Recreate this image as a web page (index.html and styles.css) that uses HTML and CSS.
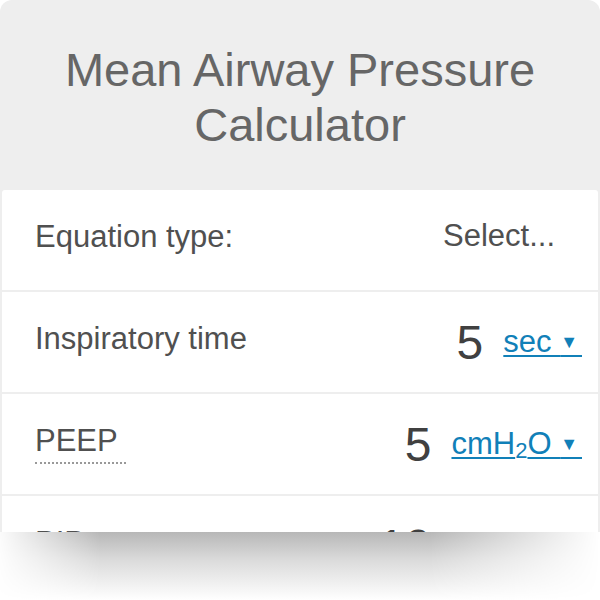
FILE: index.html
```html
<!DOCTYPE html>
<html>
<head>
<meta charset="utf-8">
<link rel="stylesheet" href="styles.css">
</head>
<body>
<div class="frame">
  <div class="card">
    <div class="header">
      <h1 class="title">Mean Airway Pressure Calculator</h1>
    </div>
    <div class="row first">
      <span class="label">Equation type:</span>
      <span class="select">Select...</span>
    </div>
    <div class="row">
      <span class="label">Inspiratory time</span>
      <span class="value"><span class="num">5</span><span class="unit">sec <span class="arrow">▼</span></span></span>
    </div>
    <div class="row">
      <span class="label dotted">PEEP</span>
      <span class="value"><span class="num">5</span><span class="unit">cmH<sub>2</sub>O <span class="arrow">▼</span></span></span>
    </div>
    <div class="row">
      <span class="label dotted">PIP</span>
      <span class="value"><span class="num">10</span><span class="unit">cmH<sub>2</sub>O <span class="arrow">▼</span></span></span>
    </div>
  </div>
</div>
<div class="shadow"></div>
</body>
</html>
```
FILE: styles.css
```css
html, body {
  margin: 0;
  padding: 0;
  background: #fff;
}
body {
  width: 600px;
  height: 600px;
  overflow: hidden;
  font-family: "Liberation Sans", Arial, sans-serif;
}
.frame {
  height: 532px;
  overflow: hidden;
}
.card {
  background: #eeeeee;
  border-radius: 12px 12px 0 0;
  padding: 0 2px;
}
.header {
  height: 190px;
  display: flex;
  align-items: center;
  justify-content: center;
  box-sizing: border-box;
  padding: 4px 40px 0;
}
.title {
  margin: 0;
  font-weight: normal;
  font-size: 47px;
  line-height: 55px;
  color: #666;
  text-align: center;
}
.row {
  background: #fff;
  height: 100px;
  margin-bottom: 2px;
  display: flex;
  align-items: center;
  justify-content: space-between;
  padding: 0 16px 0 33px;
  color: #505050;
}
.row.first {
  border-radius: 3px 3px 0 0;
  padding-right: 43px;
}
.label {
  font-size: 31px;
  margin-bottom: 6px;
}
.dotted {
  border-bottom: 2px dotted #999;
  padding-right: 8px;
  padding-bottom: 3px;
  margin-top: 4px;
  margin-bottom: 6px;
}
.select {
  font-size: 31px;
  margin-bottom: 8px;
}
.value {
  display: flex;
  align-items: center;
}
.num {
  font-size: 48px;
  color: #404040;
  margin-right: 20px;
}
.unit {
  font-size: 31px;
  color: #1180b8;
  text-decoration: underline;
  text-decoration-thickness: 2px;
  text-underline-offset: 3px;
}
.unit sub {
  font-size: 22px;
  vertical-align: -4px;
  line-height: 0;
}
.arrow {
  font-size: 18px;
  vertical-align: 4px;
  letter-spacing: 4px;
}
.shadow {
  height: 68px;
  background: linear-gradient(to bottom, #b7b7b7 0%, #dadada 40%, #ffffff 100%);
  -webkit-mask-image: linear-gradient(to right, rgba(0,0,0,0.05) 0px, #000 100px, #000 430px, rgba(0,0,0,0) 600px);
  mask-image: linear-gradient(to right, rgba(0,0,0,0.05) 0px, #000 100px, #000 430px, rgba(0,0,0,0) 600px);
}
```
